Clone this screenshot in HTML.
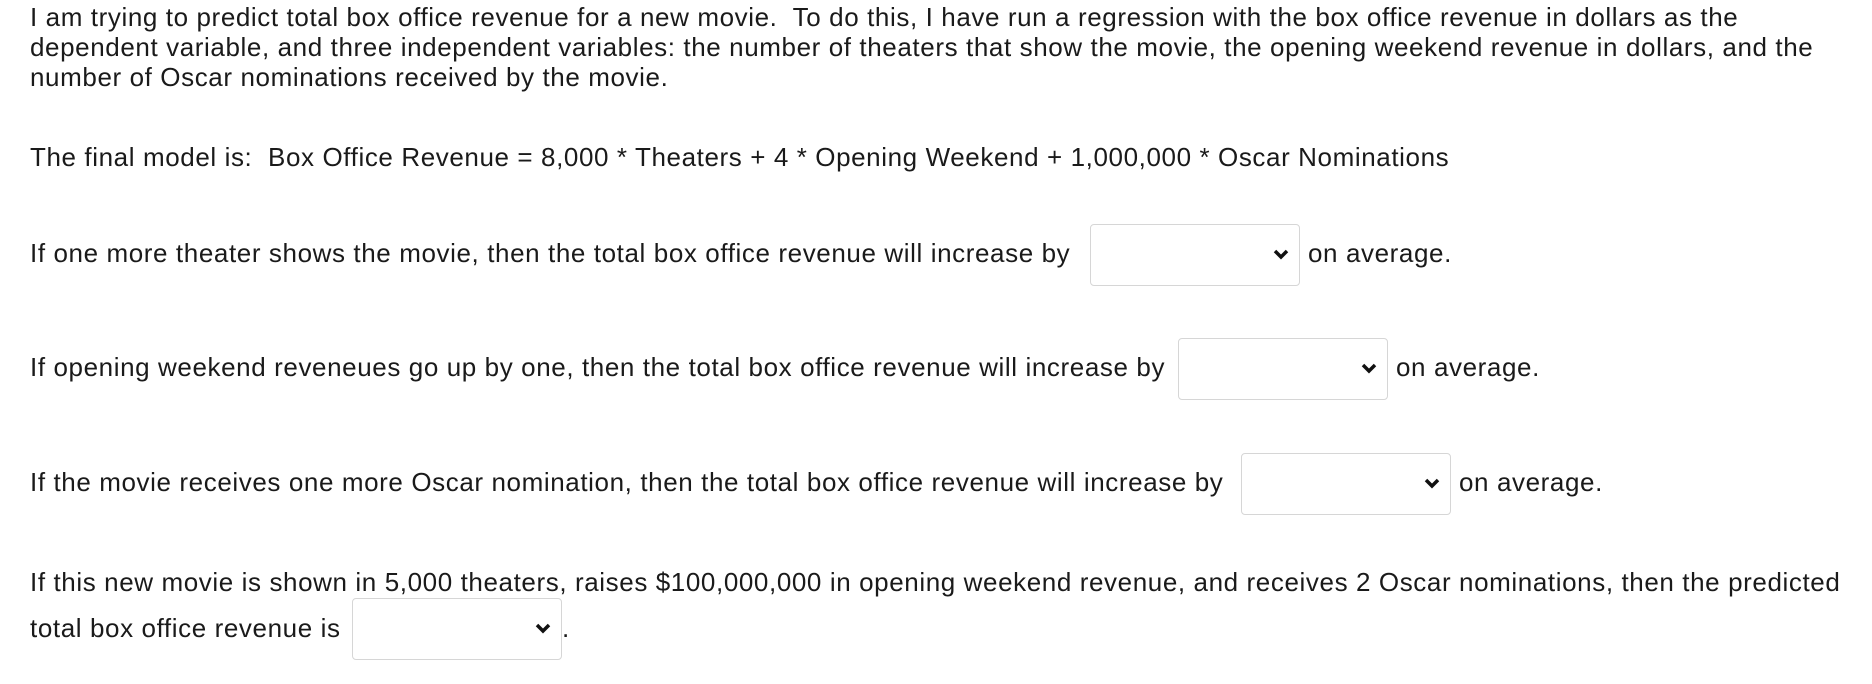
<!DOCTYPE html>
<html><head><meta charset="utf-8"><style>
body{margin:0;width:1872px;height:684px;background:#fff;font-family:"Liberation Sans",sans-serif;font-size:26px;letter-spacing:0.6px;color:#1a1a1a;position:relative;overflow:hidden}
.t{position:absolute;left:30px;white-space:nowrap;line-height:30px}
.s{position:absolute;width:210px;height:62px;border:1px solid #d6d6d6;border-radius:4px;background:#fff;box-sizing:border-box}
.s svg{position:absolute;right:10px;top:24px}
</style></head><body>
<div class="t" style="top:2px">I am trying to predict total box office revenue for a new movie.&nbsp; To do this, I have run a regression with the box office revenue in dollars as the</div>
<div class="t" style="top:32px">dependent variable, and three independent variables: the number of theaters that show the movie, the opening weekend revenue in dollars, and the</div>
<div class="t" style="top:62px">number of Oscar nominations received by the movie.</div>
<div class="t" style="top:142px">The final model is:&nbsp; Box Office Revenue = 8,000 * Theaters + 4 * Opening Weekend + 1,000,000 * Oscar Nominations</div>
<div class="t" style="top:238px">If one more theater shows the movie, then the total box office revenue will increase by</div>
<div class="s" style="left:1090px;top:224px"><svg width="16" height="12" viewBox="0 0 16 12"><path d="M2 2l6 6 6-6" fill="none" stroke="#111" stroke-width="3.5"/></svg></div>
<div class="t" style="left:1308px;top:238px">on average.</div>
<div class="t" style="top:352px">If opening weekend reveneues go up by one, then the total box office revenue will increase by</div>
<div class="s" style="left:1178px;top:338px"><svg width="16" height="12" viewBox="0 0 16 12"><path d="M2 2l6 6 6-6" fill="none" stroke="#111" stroke-width="3.5"/></svg></div>
<div class="t" style="left:1396px;top:352px">on average.</div>
<div class="t" style="top:467px">If the movie receives one more Oscar nomination, then the total box office revenue will increase by</div>
<div class="s" style="left:1241px;top:453px"><svg width="16" height="12" viewBox="0 0 16 12"><path d="M2 2l6 6 6-6" fill="none" stroke="#111" stroke-width="3.5"/></svg></div>
<div class="t" style="left:1459px;top:467px">on average.</div>
<div class="t" style="top:567px">If this new movie is shown in 5,000 theaters, raises $100,000,000 in opening weekend revenue, and receives 2 Oscar nominations, then the predicted</div>
<div class="t" style="top:613px">total box office revenue is</div>
<div class="s" style="left:352px;top:598px"><svg width="16" height="12" viewBox="0 0 16 12"><path d="M2 2l6 6 6-6" fill="none" stroke="#111" stroke-width="3.5"/></svg></div>
<div class="t" style="left:562px;top:613px">.</div>
</body></html>
